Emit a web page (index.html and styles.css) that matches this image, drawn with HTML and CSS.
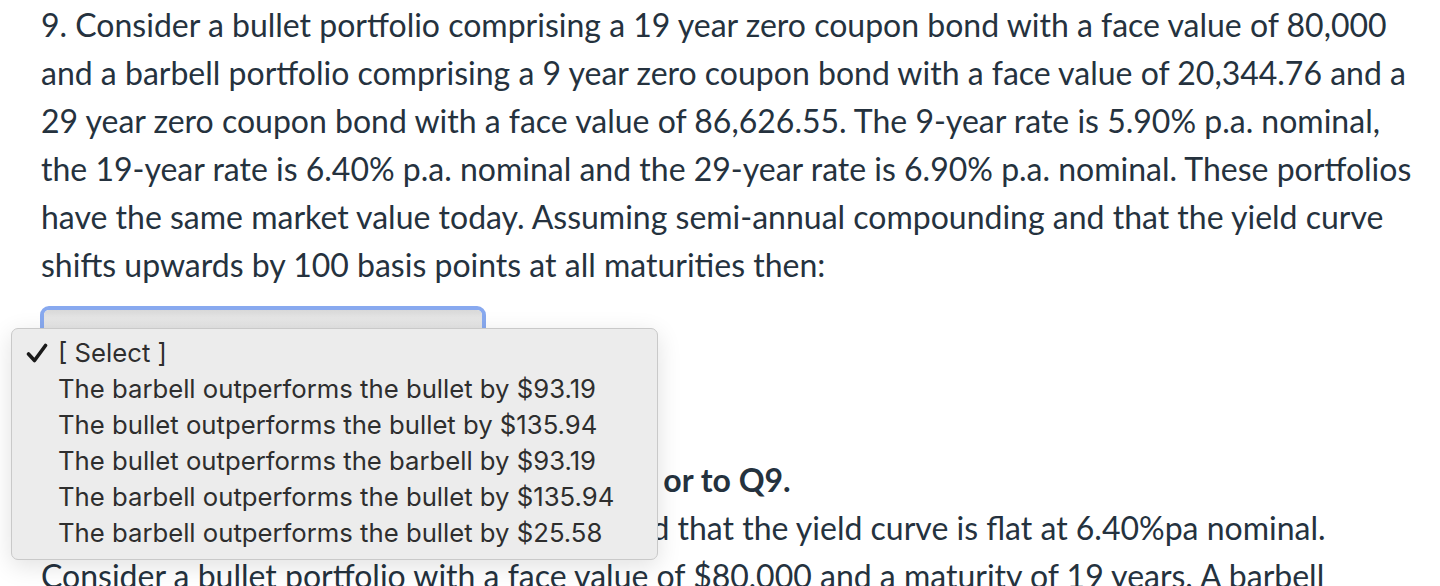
FILE: index.html
```html
<!DOCTYPE html>
<html>
<head>
	<meta charset="utf-8"/>
	<title>Question 9</title>
	<link rel="stylesheet" href="styles.css">
</head>
<body>
	<div class="question">
		<p class="text">9. Consider a bullet portfolio comprising a 19 year zero coupon bond with a face value of 80,000 and a barbell portfolio comprising a 9 year zero coupon bond with a face value of 20,344.76 and a 29 year zero coupon bond with a face value of 86,626.55. The 9-year rate is 5.90% p.a. nominal, the 19-year rate is 6.40% p.a. nominal and the 29-year rate is 6.90% p.a. nominal. These portfolios have the same market value today. Assuming semi-annual compounding and that the yield curve shifts upwards by 100 basis points at all maturities then:</p>
		<div class="answer">
			<div class="select"><div class="select-inner"></div></div>
		</div>
		<p class="text bold">The next question uses the same info in Q8 or to Q9.</p>
		<p class="text">In the next question it is reasonably assumed that the yield curve is flat at 6.40%pa nominal.</p>
		<p class="text">Consider a bullet portfolio with a face value of $80,000 and a maturity of 19 years. A barbell portfolio comprising two zero coupon bonds is also available.</p>
	</div>
	<div class="menu">
		<div class="item checked"><svg class="check" width="22" height="20" viewBox="0 0 22 20"><path d="M2.5 11 L8.5 17.5 L19.5 2.5" fill="none" stroke="#1a1a1a" stroke-width="3.6" stroke-linecap="round" stroke-linejoin="round"/></svg>[ Select ]</div>
		<div class="item">The barbell outperforms the bullet by $93.19</div>
		<div class="item">The bullet outperforms the bullet by $135.94</div>
		<div class="item">The bullet outperforms the barbell by $93.19</div>
		<div class="item">The barbell outperforms the bullet by $135.94</div>
		<div class="item">The barbell outperforms the bullet by $25.58</div>
	</div>
</body>
</html>
```
FILE: styles.css
```css
html, body{height: 100%;}
body{margin: 0;background: #fff;overflow: hidden;}
.question{padding: 1px 20px 0 41px;font-family: Lato, "Liberation Sans", sans-serif;color: #25323e;}
.text{margin: 0;font-size: 32px;line-height: 48px;}
.bold{font-weight: bold;}
.answer{padding: 17px 0 0 0;height: 167px;box-sizing: border-box;}
.select{width: 446px;height: 40px;box-sizing: border-box;border: 4px solid #88a9ef;border-radius: 9px;margin-left: -1px;}
.select-inner{height: 100%;border-radius: 5px;background: linear-gradient(#d8d8d8, #e6e6e6 25%, #e3e3e3);}

.menu{position: absolute;left: 11px;top: 328px;width: 647px;box-sizing: border-box;padding: 6px 0 8px 0;
	background: #ececec;border: 1px solid #c9c9c9;border-radius: 7px;box-shadow: 0 6px 24px rgba(0,0,0,0.12);
	font-family: Inter, Roboto, "Liberation Sans", sans-serif;font-size: 25.7px;color: #2e2e2e;}
.item{height: 36px;line-height: 36px;padding-left: 46px;white-space: nowrap;position: relative;}
.check{position: absolute;left: 14px;top: 8px;}
```
